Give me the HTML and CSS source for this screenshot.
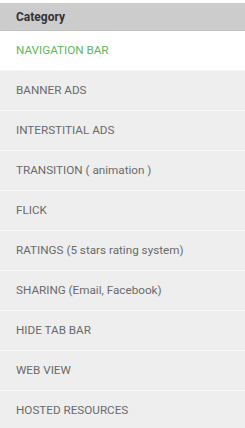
FILE: index.html
```html
<!DOCTYPE html>
<html>
<head>
<meta charset="utf-8">
<link rel="stylesheet" href="styles.css">
</head>
<body>
<div class="panel">
  <div class="header">Category</div>
  <ul class="list">
    <li class="item active">NAVIGATION BAR</li>
    <li class="item">BANNER ADS</li>
    <li class="item">INTERSTITIAL ADS</li>
    <li class="item">TRANSITION ( animation )</li>
    <li class="item">FLICK</li>
    <li class="item">RATINGS (5 stars rating system)</li>
    <li class="item">SHARING (Email, Facebook)</li>
    <li class="item">HIDE TAB BAR</li>
    <li class="item">WEB VIEW</li>
    <li class="item">HOSTED RESOURCES</li>
  </ul>
</div>
</body>
</html>
```
FILE: styles.css
```css
html, body {
  margin: 0;
  padding: 0;
  background: #ffffff;
}
body {
  font-family: Roboto, "Liberation Sans", sans-serif;
  padding-top: 3px;
}
.panel {
  width: 245px;
}
.header {
  height: 27px;
  background: #cccccc;
  border-bottom: 1px solid #c2c2c2;
  display: flex;
  align-items: center;
  padding-left: 16px;
  font-size: 12px;
  font-weight: 700;
  color: #333333;
}
.list {
  list-style: none;
  margin: 0;
  padding: 0;
}
.item {
  border-top: 1px solid #f7f7f7;
  background: #eeeeee;
  display: flex;
  align-items: center;
  padding-left: 16px;
  padding-bottom: 1px;
  height: 38px;
  font-size: 11.7px;
  color: #6a6a6a;
}
.item.active {
  background: #ffffff;
  border-top: none;
  color: #5cb85c;
}
```
